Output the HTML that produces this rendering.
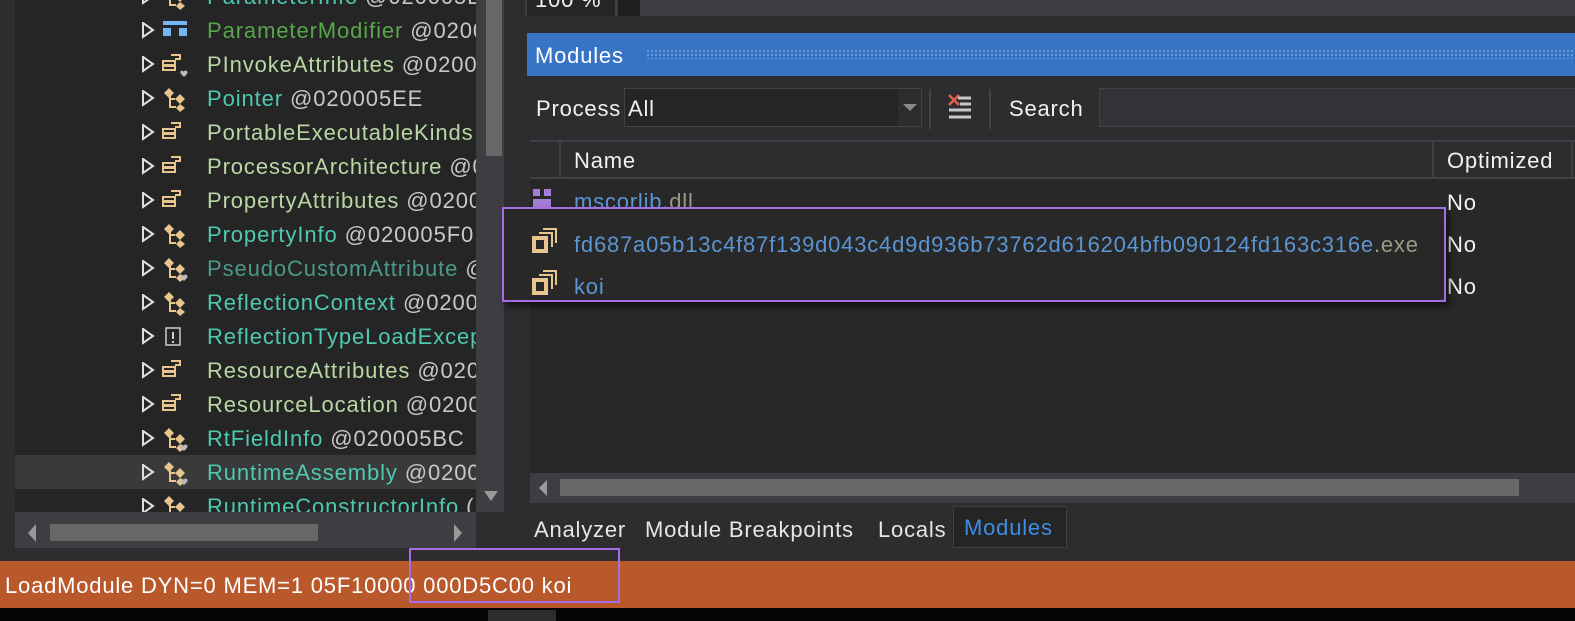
<!DOCTYPE html>
<html><head><meta charset="utf-8"><style>
*{margin:0;padding:0;box-sizing:border-box}
body{width:1575px;height:621px;background:#2d2d30;font-family:"Liberation Sans",sans-serif;position:relative;overflow:hidden;color:#f1f1f1;letter-spacing:0.8px}
.abs{position:absolute;white-space:nowrap}
#tree{left:15px;top:0;width:461px;height:512px;background:#252526;overflow:hidden}
.row{position:absolute;left:0;width:461px;height:34px;font-size:22px;line-height:34px;white-space:nowrap;letter-spacing:0.9px}
.row .tri{position:absolute;left:127px;top:9px}
.row .ic{position:absolute;left:147px;top:5px}
.row .t{position:absolute;left:192px;top:1px}
.tk{color:#c8c8c8}
.cl{color:#4ec9b0}.en{color:#b8d7a3}.st{color:#57a64a}.dm{color:#4a9a88}
.f{font-size:22px}
</style></head><body>
<div id="tree" class="abs">
<svg width="0" height="0" style="position:absolute"><defs>
<g id="tri"><path d="M1 1 L11 8 L1 15 Z" fill="none" stroke="#e0e0e0" stroke-width="2"/></g>
<g id="enum"><rect x="1" y="9" width="12" height="4" fill="none" stroke="#e8c48e" stroke-width="2"/><rect x="1" y="14" width="12" height="4" fill="none" stroke="#e8c48e" stroke-width="2"/><path d="M9 3h9v4h-5" fill="none" stroke="#e8c48e" stroke-width="2"/></g>
<g id="cls"><path d="M2 7 L7 2 L12 7 L7 12Z M13 13 L18 8 L23 13 L18 18Z M14 22 L18 18 L23 22 L18 26Z" fill="#e8c48e"/><path d="M8 8 V21 H14 M8 13 H13" stroke="#e8c48e" stroke-width="2" fill="none"/></g>
<g id="heart"><path d="M21 20 c2-3 6-1 4 2 l-3 3 l-3-3 c-2-3 2-5 2-2z" fill="#bbb"/></g>
</defs></svg>
</div>
<script>
const rows=[
["ParameterInfo","@020005E","cl","cls"],
["ParameterModifier","@0200","st","struct"],
["PInvokeAttributes","@0200","en","enumh"],
["Pointer","@020005EE","cl","cls"],
["PortableExecutableKinds","@","en","enum"],
["ProcessorArchitecture","@0","en","enum"],
["PropertyAttributes","@0200","en","enum"],
["PropertyInfo","@020005F0","cl","cls"],
["PseudoCustomAttribute","@","dm","clsh"],
["ReflectionContext","@0200","cl","cls"],
["ReflectionTypeLoadExcep","","cl","exc"],
["ResourceAttributes","@020","en","enum"],
["ResourceLocation","@0200","en","enum"],
["RtFieldInfo","@020005BC","cl","clsh"],
["RuntimeAssembly","@0200","cl","clsh"],
["RuntimeConstructorInfo","(","cl","clsh"]];
let h="";
rows.forEach((r,i)=>{const top=-21+34*i;let ic="";
if(r[3]=="struct")ic='<rect x="1" y="3" width="24" height="4" fill="#75b7f5"/><rect x="1" y="10" width="8" height="8" fill="#75b7f5"/><rect x="17" y="10" width="8" height="8" fill="#75b7f5"/>';
else if(r[3]=="exc")ic='<rect x="4" y="4" width="14" height="17" fill="none" stroke="#ccc" stroke-width="1.5"/><path d="M11 8v7M11 17v2" stroke="#ccc" stroke-width="2"/>';
else if(r[3].startsWith("enum"))ic='<use href="#enum"/>'+(r[3]=="enumh"?'<use href="#heart"/>':'');
else ic='<use href="#cls"/>'+(r[3]=="clsh"?'<use href="#heart"/>':'');
h+=`<div class="row" style="top:${top}px;${i==14?'background:#3a3a3b':''}"><svg class="tri" width="14" height="17"><use href="#tri"/></svg><svg class="ic" width="28" height="28">${ic}</svg><span class="t"><span class="${r[2]}">${r[0]}</span> <span class="tk">${r[1]}</span></span></div>`;});
document.getElementById("tree").insertAdjacentHTML("beforeend",h);
</script>
<div class="abs" style="left:476px;top:0;width:28px;height:512px;background:#3e3e42"></div>
<div class="abs" style="left:486px;top:0;width:16px;height:156px;background:#686868"></div>
<svg class="abs" style="left:483px;top:490px" width="16" height="12"><path d="M1 1h14l-7 10z" fill="#999"/></svg>
<div class="abs" style="left:15px;top:512px;width:461px;height:36px;background:#3e3e42"></div>
<div class="abs" style="left:50px;top:524px;width:268px;height:17px;background:#686868"></div>
<svg class="abs" style="left:27px;top:523px" width="10" height="20"><path d="M9 1v18L1 10z" fill="#999"/></svg>
<svg class="abs" style="left:453px;top:523px" width="10" height="20"><path d="M1 1v18l8-9z" fill="#999"/></svg>
<div class="abs" style="left:525px;top:0;width:1050px;height:16px;background:#3e3e42"></div>
<div class="abs f" style="left:527px;top:-8px;width:88px;height:24px;background:#252526;line-height:16px;padding-left:8px;overflow:hidden">100 %</div>
<div class="abs" style="left:618px;top:0;width:22px;height:16px;background:#1e1e1e"></div>
<div class="abs" style="left:525px;top:30px;width:1050px;height:475px;background:#2d2d30"></div>
<div class="abs" style="left:527px;top:33px;width:1048px;height:43px;background:#3874c5"></div>
<div class="abs f" style="left:535px;top:34px;line-height:43px;color:#fff">Modules</div>
<div class="abs" style="left:646px;top:49px;width:929px;height:10px;background-image:radial-gradient(circle,#6d9ad8 1px,transparent 1.3px);background-size:4px 4px"></div>
<div class="abs f" style="left:536px;top:89px;line-height:40px">Process</div>
<div class="abs" style="left:624px;top:88px;width:298px;height:39px;background:#252526;border:1px solid #434346"></div>
<div class="abs f" style="left:628px;top:89px;line-height:40px">All</div>
<div class="abs" style="left:898px;top:89px;width:23px;height:37px;background:#2d2d30"></div>
<svg class="abs" style="left:903px;top:104px" width="14" height="8"><path d="M0 0h14l-7 7z" fill="#888"/></svg>
<div class="abs" style="left:929px;top:89px;width:2px;height:40px;background:#434346"></div>
<svg class="abs" style="left:946px;top:92px" width="30" height="32"><path d="M3 3l10 10M13 3L3 13" stroke="#e05e4b" stroke-width="2.5"/><path d="M12 6h13M14 12h11M3 18h22M3 25h22" stroke="#c8c8c8" stroke-width="3"/></svg>
<div class="abs" style="left:989px;top:89px;width:2px;height:40px;background:#434346"></div>
<div class="abs f" style="left:1009px;top:89px;line-height:40px">Search</div>
<div class="abs" style="left:1099px;top:88px;width:480px;height:39px;background:#333337;border:1px solid #434346"></div>
<div class="abs" style="left:530px;top:140px;width:1045px;height:333px;background:#282828"></div>
<div class="abs" style="left:530px;top:140px;width:1045px;height:39px;background:#2d2d30;border-top:2px solid #3f3f46;border-bottom:2px solid #3f3f46"></div>
<div class="abs" style="left:559px;top:142px;width:2px;height:36px;background:#3f3f46"></div>
<div class="abs" style="left:1432px;top:142px;width:2px;height:36px;background:#3f3f46"></div>
<div class="abs" style="left:1571px;top:142px;width:2px;height:36px;background:#3f3f46"></div>
<div class="abs f" style="left:574px;top:143px;line-height:36px">Name</div>
<div class="abs f" style="left:1447px;top:143px;line-height:36px">Optimized</div>
<svg class="abs" style="left:532px;top:188px" width="22" height="20"><rect x="1" y="1" width="7" height="7" fill="#a57ed8"/><rect x="12" y="1" width="7" height="7" fill="#a57ed8"/><rect x="1" y="11" width="18" height="9" fill="#a57ed8"/></svg>
<div class="abs f" style="left:574px;top:185px;line-height:34px;color:#5b95d3">mscorlib<span style="color:#9a9a86">.dll</span></div>
<div class="abs f" style="left:1447px;top:186px;line-height:34px">No</div>
<div class="abs f" style="left:1447px;top:228px;line-height:34px">No</div>
<div class="abs f" style="left:1447px;top:270px;line-height:34px">No</div>
<div class="abs" style="left:502px;top:207px;width:944px;height:95px;border:2px solid #a56ee6;box-shadow:3px 4px 6px rgba(0,0,0,.6);background:#282828"></div>
<svg class="abs" style="left:532px;top:227px" width="26" height="28"><path d="M11 2h13v14M7 6h13v14" fill="none" stroke="#e8c48e" stroke-width="2"/><rect x="2" y="11" width="12" height="13" fill="none" stroke="#e8c48e" stroke-width="4"/></svg>
<svg class="abs" style="left:532px;top:269px" width="26" height="28"><path d="M11 2h13v14M7 6h13v14" fill="none" stroke="#e8c48e" stroke-width="2"/><rect x="2" y="11" width="12" height="13" fill="none" stroke="#e8c48e" stroke-width="4"/></svg>
<div class="abs f" style="left:574px;top:228px;line-height:34px;color:#5b95d3">fd687a05b13c4f87f139d043c4d9d936b73762d616204bfb090124fd163c316e<span style="color:#9a9a86">.exe</span></div>
<div class="abs f" style="left:574px;top:270px;line-height:34px;color:#5b95d3">koi</div>
<div class="abs" style="left:530px;top:473px;width:1045px;height:30px;background:#3e3e42"></div>
<div class="abs" style="left:560px;top:479px;width:959px;height:17px;background:#686868"></div>
<svg class="abs" style="left:538px;top:479px" width="10" height="18"><path d="M9 1v16L1 9z" fill="#999"/></svg>
<div class="abs f" style="left:534px;top:510px;line-height:40px;color:#e6e6e6">Analyzer</div>
<div class="abs f" style="left:645px;top:510px;line-height:40px;color:#e6e6e6">Module Breakpoints</div>
<div class="abs f" style="left:878px;top:510px;line-height:40px;color:#e6e6e6">Locals</div>
<div class="abs" style="left:953px;top:506px;width:114px;height:42px;background:#252526;border:1px solid #3f3f46"></div>
<div class="abs f" style="left:964px;top:508px;line-height:40px;color:#3d8ee6">Modules</div>
<div class="abs" style="left:0;top:561px;width:1575px;height:47px;background:#b9582a"></div>
<div class="abs f" style="left:5px;top:564px;line-height:44px;color:#fff">LoadModule DYN=0 MEM=1 05F10000 000D5C00 koi</div>
<div class="abs" style="left:409px;top:548px;width:211px;height:55px;border:2px solid #a56ee6"></div>
<div class="abs" style="left:0;top:608px;width:1575px;height:13px;background:#050505"></div>
<div class="abs" style="left:488px;top:610px;width:68px;height:11px;background:#2d2d30"></div>
</body></html>
